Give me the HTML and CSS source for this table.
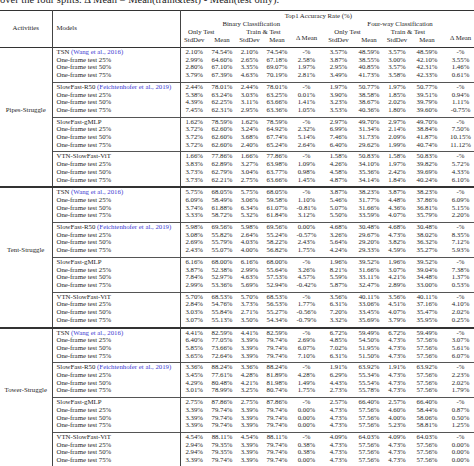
FILE: index.html
```html
<!DOCTYPE html>
<html>
<head>
<meta charset="utf-8">
<link rel="stylesheet" href="styles.css">
</head>
<body>
<div class="caption">over the four splits. Δ Mean = Mean(train&amp;test) - Mean(test only).</div>
<table class="res">
<colgroup>
<col class="c-act"><col class="c-model">
<col class="c-n28"><col class="c-n28"><col class="c-n27"><col class="c-n28"><col class="c-n31">
<col class="c-n33"><col class="c-n28"><col class="c-n28"><col class="c-n32"><col class="c-n35">
</colgroup>
<thead>
<tr class="h1"><td class="act" rowspan="4">Activities</td><td class="model" rowspan="4">Models</td><td colspan="10" class="top1">Top1 Accuracy Rate (%)</td></tr>
<tr class="h2"><td colspan="5" class="bin">Binary Classification</td><td colspan="5" class="four">Four-way Classification</td></tr>
<tr class="h3"><td colspan="2" class="ot1">Only Test</td><td colspan="2">Train &amp; Test</td><td rowspan="2">Δ Mean</td><td colspan="2" class="ot2">Only Test</td><td colspan="2" class="tt2">Train &amp; Test</td><td rowspan="2">Δ Mean</td></tr>
<tr class="h4"><td>StdDev</td><td>Mean</td><td>StdDev</td><td>Mean</td><td>StdDev</td><td>Mean</td><td>StdDev</td><td>Mean</td></tr>
</thead>

<tbody>
<tr><td class="act label" rowspan="16">Pipes-Struggle</td><td class="model">TSN <span class="cite">(Wang et al., 2016)</span></td><td>2.10%</td><td>74.54%</td><td>2.10%</td><td>74.54%</td><td>-%</td><td>3.57%</td><td>48.59%</td><td>3.57%</td><td>48.59%</td><td>-%</td></tr>
<tr><td class="model">One-frame test 25%</td><td>2.99%</td><td>64.60%</td><td>2.65%</td><td>67.18%</td><td>2.58%</td><td>3.87%</td><td>38.55%</td><td>3.00%</td><td>42.10%</td><td>3.55%</td></tr>
<tr><td class="model">One-frame test 50%</td><td>2.80%</td><td>67.10%</td><td>3.35%</td><td>69.07%</td><td>1.97%</td><td>2.95%</td><td>40.85%</td><td>3.57%</td><td>42.31%</td><td>1.46%</td></tr>
<tr class="last"><td class="model">One-frame test 75%</td><td>3.79%</td><td>67.39%</td><td>4.63%</td><td>70.19%</td><td>2.81%</td><td>3.49%</td><td>41.73%</td><td>3.58%</td><td>42.33%</td><td>0.61%</td></tr>
<tr class="grp"><td class="model">SlowFast-R50 <span class="cite">(Feichtenhofer et al., 2019)</span></td><td>2.44%</td><td>78.01%</td><td>2.44%</td><td>78.01%</td><td>-%</td><td>1.97%</td><td>50.77%</td><td>1.97%</td><td>50.77%</td><td>-%</td></tr>
<tr><td class="model">One-frame test 25%</td><td>5.38%</td><td>63.24%</td><td>3.03%</td><td>63.25%</td><td>0.01%</td><td>3.90%</td><td>38.58%</td><td>1.85%</td><td>39.51%</td><td>0.94%</td></tr>
<tr><td class="model">One-frame test 50%</td><td>4.39%</td><td>62.25%</td><td>3.11%</td><td>63.66%</td><td>1.41%</td><td>3.23%</td><td>38.67%</td><td>2.02%</td><td>39.79%</td><td>1.11%</td></tr>
<tr class="last"><td class="model">One-frame test 75%</td><td>7.45%</td><td>62.31%</td><td>2.95%</td><td>63.36%</td><td>1.05%</td><td>3.53%</td><td>40.36%</td><td>1.80%</td><td>39.60%</td><td>-0.75%</td></tr>
<tr class="grp"><td class="model">SlowFast-gMLP</td><td>1.62%</td><td>78.59%</td><td>1.62%</td><td>78.59%</td><td>-%</td><td>2.97%</td><td>49.70%</td><td>2.97%</td><td>49.70%</td><td>-%</td></tr>
<tr><td class="model">One-frame test 25%</td><td>3.72%</td><td>62.60%</td><td>3.24%</td><td>64.92%</td><td>2.32%</td><td>6.99%</td><td>31.34%</td><td>2.14%</td><td>38.84%</td><td>7.50%</td></tr>
<tr><td class="model">One-frame test 50%</td><td>3.72%</td><td>62.60%</td><td>3.68%</td><td>67.74%</td><td>5.14%</td><td>7.46%</td><td>31.73%</td><td>2.09%</td><td>41.87%</td><td>10.15%</td></tr>
<tr class="last"><td class="model">One-frame test 75%</td><td>3.72%</td><td>62.60%</td><td>2.40%</td><td>65.24%</td><td>2.64%</td><td>6.40%</td><td>29.62%</td><td>1.99%</td><td>40.74%</td><td>11.12%</td></tr>
<tr class="grp"><td class="model">VTN-SlowFast-ViT</td><td>1.66%</td><td>77.86%</td><td>1.66%</td><td>77.86%</td><td>-%</td><td>1.58%</td><td>50.83%</td><td>1.58%</td><td>50.83%</td><td>-%</td></tr>
<tr><td class="model">One-frame test 25%</td><td>3.83%</td><td>62.89%</td><td>3.27%</td><td>63.98%</td><td>1.09%</td><td>4.26%</td><td>34.10%</td><td>1.97%</td><td>39.82%</td><td>5.72%</td></tr>
<tr><td class="model">One-frame test 50%</td><td>3.73%</td><td>62.79%</td><td>3.04%</td><td>63.77%</td><td>0.98%</td><td>4.58%</td><td>35.36%</td><td>2.42%</td><td>39.69%</td><td>4.33%</td></tr>
<tr class="last"><td class="model">One-frame test 75%</td><td>3.73%</td><td>62.21%</td><td>2.75%</td><td>63.66%</td><td>1.45%</td><td>4.87%</td><td>34.14%</td><td>1.84%</td><td>40.24%</td><td>6.10%</td></tr>
</tbody>

<tbody>
<tr><td class="act label" rowspan="16">Tent-Struggle</td><td class="model">TSN <span class="cite">(Wang et al., 2016)</span></td><td>5.75%</td><td>68.05%</td><td>5.75%</td><td>68.05%</td><td>-%</td><td>3.87%</td><td>38.23%</td><td>3.87%</td><td>38.23%</td><td>-%</td></tr>
<tr><td class="model">One-frame test 25%</td><td>6.09%</td><td>58.49%</td><td>3.06%</td><td>59.58%</td><td>1.10%</td><td>5.46%</td><td>31.77%</td><td>4.48%</td><td>37.86%</td><td>6.09%</td></tr>
<tr><td class="model">One-frame test 50%</td><td>3.74%</td><td>61.88%</td><td>6.34%</td><td>61.07%</td><td>-0.81%</td><td>5.07%</td><td>31.66%</td><td>4.36%</td><td>36.81%</td><td>5.15%</td></tr>
<tr class="last"><td class="model">One-frame test 75%</td><td>3.33%</td><td>58.72%</td><td>5.32%</td><td>61.84%</td><td>3.12%</td><td>5.50%</td><td>33.59%</td><td>4.07%</td><td>35.79%</td><td>2.20%</td></tr>
<tr class="grp"><td class="model">SlowFast-R50 <span class="cite">(Feichtenhofer et al., 2019)</span></td><td>5.98%</td><td>69.56%</td><td>5.98%</td><td>69.56%</td><td>0.00%</td><td>4.68%</td><td>30.48%</td><td>4.68%</td><td>30.48%</td><td>-%</td></tr>
<tr><td class="model">One-frame test 25%</td><td>3.08%</td><td>55.82%</td><td>2.64%</td><td>55.24%</td><td>-0.57%</td><td>3.26%</td><td>29.67%</td><td>4.73%</td><td>38.02%</td><td>8.35%</td></tr>
<tr><td class="model">One-frame test 50%</td><td>2.69%</td><td>55.79%</td><td>4.03%</td><td>58.22%</td><td>2.43%</td><td>5.64%</td><td>29.20%</td><td>3.82%</td><td>36.32%</td><td>7.12%</td></tr>
<tr class="last"><td class="model">One-frame test 75%</td><td>2.43%</td><td>55.07%</td><td>4.00%</td><td>56.82%</td><td>1.75%</td><td>4.24%</td><td>29.33%</td><td>4.59%</td><td>35.27%</td><td>5.93%</td></tr>
<tr class="grp"><td class="model">SlowFast-gMLP</td><td>6.16%</td><td>68.00%</td><td>6.16%</td><td>68.00%</td><td>-%</td><td>1.96%</td><td>39.52%</td><td>1.96%</td><td>39.52%</td><td>-%</td></tr>
<tr><td class="model">One-frame test 25%</td><td>3.87%</td><td>52.38%</td><td>2.99%</td><td>55.64%</td><td>3.26%</td><td>8.21%</td><td>31.66%</td><td>3.07%</td><td>39.04%</td><td>7.38%</td></tr>
<tr><td class="model">One-frame test 50%</td><td>7.84%</td><td>52.97%</td><td>4.63%</td><td>57.53%</td><td>4.57%</td><td>5.59%</td><td>33.11%</td><td>4.21%</td><td>34.48%</td><td>1.37%</td></tr>
<tr class="last"><td class="model">One-frame test 75%</td><td>2.99%</td><td>53.36%</td><td>5.69%</td><td>52.94%</td><td>-0.42%</td><td>5.87%</td><td>32.47%</td><td>2.89%</td><td>33.00%</td><td>0.53%</td></tr>
<tr class="grp"><td class="model">VTN-SlowFast-ViT</td><td>5.70%</td><td>68.53%</td><td>5.70%</td><td>68.53%</td><td>-%</td><td>3.56%</td><td>40.11%</td><td>3.56%</td><td>40.11%</td><td>-%</td></tr>
<tr><td class="model">One-frame test 25%</td><td>2.84%</td><td>54.76%</td><td>3.73%</td><td>56.53%</td><td>1.77%</td><td>6.31%</td><td>33.06%</td><td>4.51%</td><td>37.16%</td><td>4.10%</td></tr>
<tr><td class="model">One-frame test 50%</td><td>3.03%</td><td>55.84%</td><td>2.71%</td><td>55.27%</td><td>-0.56%</td><td>7.20%</td><td>33.45%</td><td>4.07%</td><td>35.47%</td><td>2.02%</td></tr>
<tr class="last"><td class="model">One-frame test 75%</td><td>3.07%</td><td>55.13%</td><td>3.50%</td><td>54.34%</td><td>-0.79%</td><td>3.32%</td><td>35.69%</td><td>3.79%</td><td>35.95%</td><td>0.25%</td></tr>
</tbody>

<tbody>
<tr><td class="act label" rowspan="16">Tower-Struggle</td><td class="model">TSN <span class="cite">(Wang et al., 2016)</span></td><td>4.41%</td><td>82.59%</td><td>4.41%</td><td>82.59%</td><td>-%</td><td>6.72%</td><td>59.49%</td><td>6.72%</td><td>59.49%</td><td>-%</td></tr>
<tr><td class="model">One-frame test 25%</td><td>6.40%</td><td>77.05%</td><td>3.39%</td><td>79.74%</td><td>2.69%</td><td>4.85%</td><td>54.50%</td><td>4.73%</td><td>57.56%</td><td>3.07%</td></tr>
<tr><td class="model">One-frame test 50%</td><td>5.85%</td><td>73.66%</td><td>3.39%</td><td>79.74%</td><td>6.07%</td><td>7.02%</td><td>51.95%</td><td>4.73%</td><td>57.56%</td><td>5.61%</td></tr>
<tr class="last"><td class="model">One-frame test 75%</td><td>3.65%</td><td>72.64%</td><td>3.39%</td><td>79.74%</td><td>7.10%</td><td>6.31%</td><td>51.50%</td><td>4.73%</td><td>57.56%</td><td>6.07%</td></tr>
<tr class="grp"><td class="model">SlowFast-R50 <span class="cite">(Feichtenhofer et al., 2019)</span></td><td>3.36%</td><td>88.24%</td><td>3.36%</td><td>88.24%</td><td>-%</td><td>1.91%</td><td>63.92%</td><td>1.91%</td><td>63.92%</td><td>-%</td></tr>
<tr><td class="model">One-frame test 25%</td><td>3.45%</td><td>77.61%</td><td>4.28%</td><td>81.89%</td><td>4.28%</td><td>6.29%</td><td>55.34%</td><td>4.73%</td><td>57.56%</td><td>2.23%</td></tr>
<tr><td class="model">One-frame test 50%</td><td>4.29%</td><td>80.48%</td><td>4.21%</td><td>81.98%</td><td>1.49%</td><td>4.43%</td><td>55.54%</td><td>4.73%</td><td>57.56%</td><td>2.02%</td></tr>
<tr class="last"><td class="model">One-frame test 75%</td><td>3.01%</td><td>78.99%</td><td>3.25%</td><td>80.74%</td><td>1.75%</td><td>2.73%</td><td>55.78%</td><td>4.73%</td><td>57.56%</td><td>1.79%</td></tr>
<tr class="grp"><td class="model">SlowFast-gMLP</td><td>2.75%</td><td>87.86%</td><td>2.75%</td><td>87.86%</td><td>-%</td><td>2.57%</td><td>66.40%</td><td>2.57%</td><td>66.40%</td><td>-%</td></tr>
<tr><td class="model">One-frame test 25%</td><td>3.39%</td><td>79.74%</td><td>3.39%</td><td>79.74%</td><td>0.00%</td><td>4.73%</td><td>57.56%</td><td>4.60%</td><td>58.44%</td><td>0.87%</td></tr>
<tr><td class="model">One-frame test 50%</td><td>3.39%</td><td>79.74%</td><td>3.39%</td><td>79.74%</td><td>0.00%</td><td>4.73%</td><td>57.56%</td><td>4.00%</td><td>58.06%</td><td>0.50%</td></tr>
<tr class="last"><td class="model">One-frame test 75%</td><td>3.39%</td><td>79.74%</td><td>3.39%</td><td>79.74%</td><td>0.00%</td><td>4.73%</td><td>57.56%</td><td>5.23%</td><td>58.81%</td><td>1.25%</td></tr>
<tr class="grp"><td class="model">VTN-SlowFast-ViT</td><td>4.54%</td><td>88.11%</td><td>4.54%</td><td>88.11%</td><td>-%</td><td>4.09%</td><td>64.03%</td><td>4.09%</td><td>64.03%</td><td>-%</td></tr>
<tr><td class="model">One-frame test 25%</td><td>2.94%</td><td>79.35%</td><td>3.39%</td><td>79.74%</td><td>0.38%</td><td>4.73%</td><td>57.56%</td><td>4.73%</td><td>57.56%</td><td>0.00%</td></tr>
<tr><td class="model">One-frame test 50%</td><td>2.94%</td><td>79.35%</td><td>3.39%</td><td>79.74%</td><td>0.38%</td><td>4.73%</td><td>57.56%</td><td>4.73%</td><td>57.56%</td><td>0.00%</td></tr>
<tr class="last"><td class="model">One-frame test 75%</td><td>3.39%</td><td>79.74%</td><td>3.39%</td><td>79.74%</td><td>0.00%</td><td>4.73%</td><td>57.56%</td><td>4.73%</td><td>57.56%</td><td>0.00%</td></tr>
</tbody>
</table>
</body>
</html>
```
FILE: styles.css
```css
html, body {
  margin: 0;
  padding: 0;
  background: #ffffff;
  overflow: hidden;
}
body {
  width: 474px;
  height: 466px;
  font-family: "Liberation Serif", "DejaVu Serif", serif;
  color: #1e1e1e;
}
.caption {
  font-size: 10.5px;
  line-height: 12px;
  height: 16px;
  margin-top: -6px;
  white-space: nowrap;
}
.res {
  border-collapse: collapse;
  table-layout: fixed;
  width: 478px;
  font-size: 6.8px;
  border-top: 1px solid #333;
}
.c-act { width: 52px; }
.c-model { width: 128px; }
.c-n27 { width: 27px; }
.c-n28 { width: 28px; }
.c-n31 { width: 31px; }
.c-n32 { width: 32px; }
.c-n33 { width: 33px; }
.c-n35 { width: 35px; }

.res td {
  padding: 0;
  line-height: 7.7px;
  text-align: center;
  white-space: nowrap;
  vertical-align: middle;
}
.res td.act {
  border-right: 1px solid #444;
}
.res td.label {
  vertical-align: top;
  padding-top: 57.9px;
}
.res td.model {
  text-align: left;
  padding-left: 4px;
  border-right: 1px solid #444;
}
.res thead td {
  line-height: 8px;
}
.res thead .h1 td { padding-top: 1px; }
.res thead .h4 td { padding-bottom: 3px; }
.res thead td.act, .res thead td.model { padding-top: 0; padding-bottom: 3px; }
.res thead { border-bottom: 1px solid #333; }
.top1 { padding-right: 22px !important; }
.ot1 { padding-right: 14px !important; }
.ot2 { padding-right: 10px !important; }
.tt2 { padding-right: 10px !important; }

.res tbody { border-top: 2px solid #333; }
.res tbody:first-of-type { border-top: none; }
.res tr.last td { padding-bottom: 3px; }
.res tr.grp td { border-top: 1px solid #555; }
.cite { color: #3c3cd2; }
```
